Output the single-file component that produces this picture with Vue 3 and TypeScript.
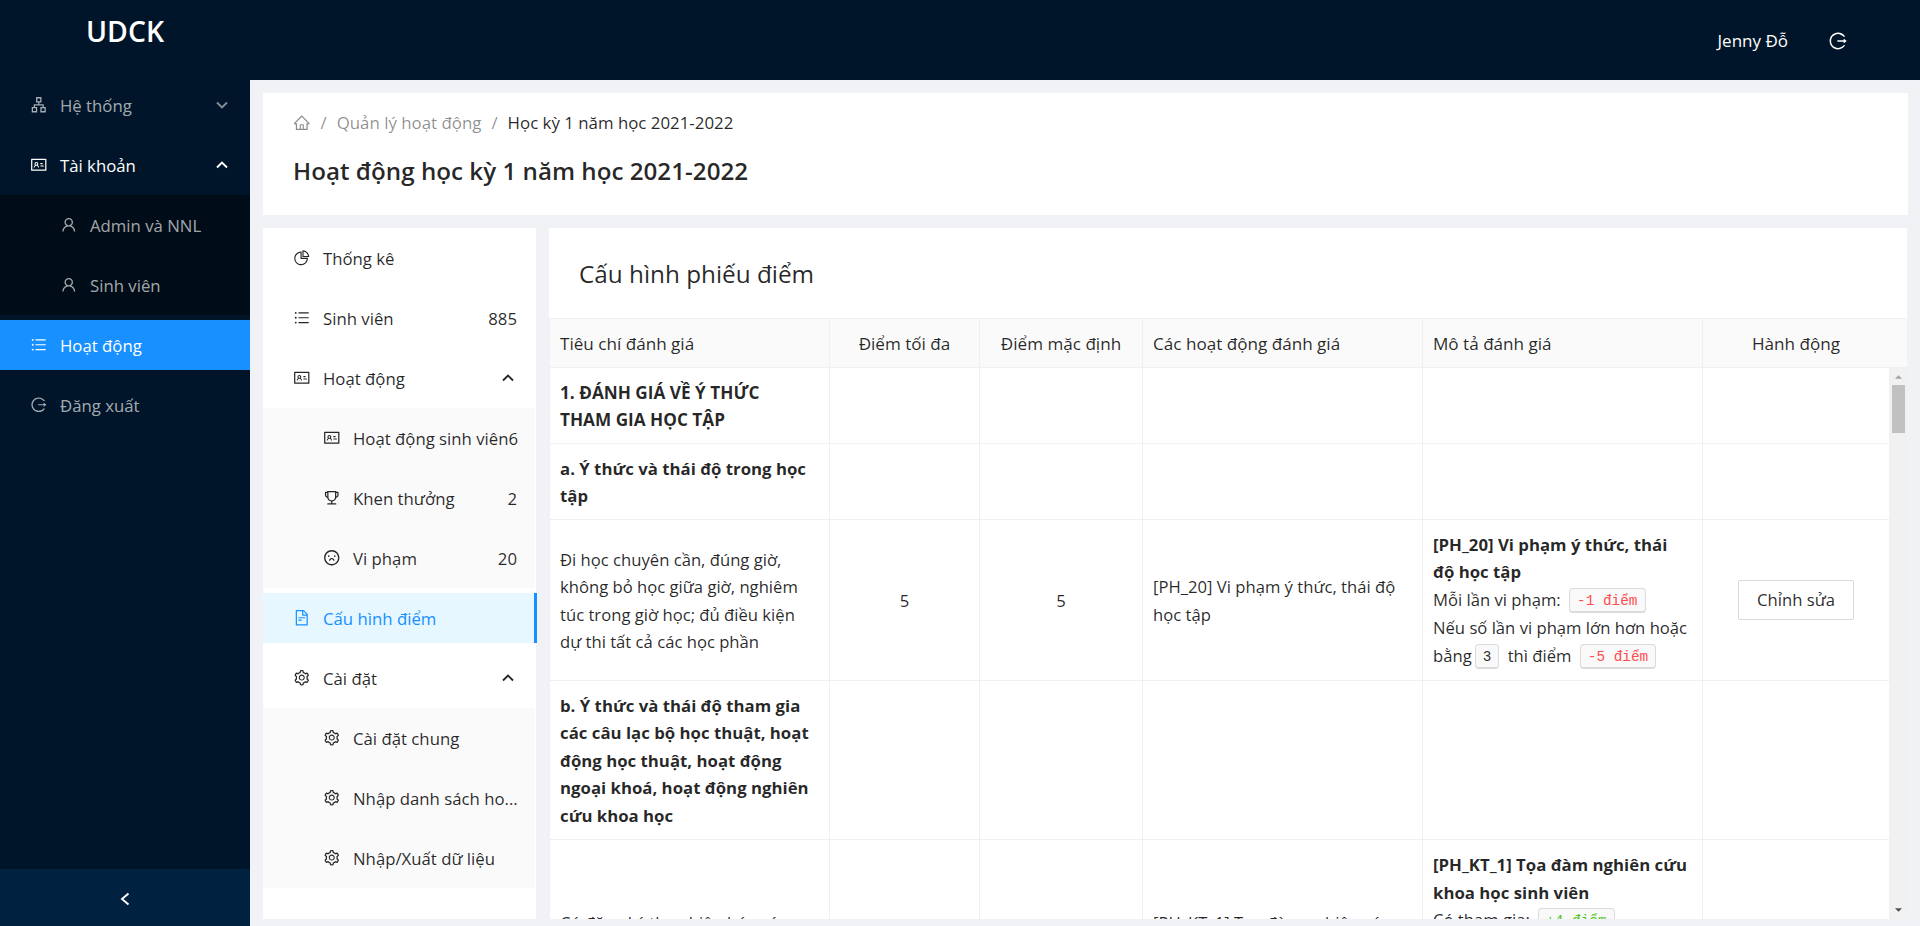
<script setup lang="ts">
interface MenuEntry {
  label: string
  icon: string
  count?: string
  arrow?: 'up' | 'down'
  state?: 'open' | 'selected'
  children?: MenuEntry[]
}

interface Row {
  kind: string
  title: string[]
  bold?: boolean
  max?: string
  def?: string
  activity?: string[]
  rule?: 'violation' | 'reward'
}

const icons: Record<string, string> = {
  apartment:
    'M908 640H804V488c0-4.4-3.6-8-8-8H548v-96h108c8.8 0 16-7.2 16-16V80c0-8.8-7.2-16-16-16H368c-8.8 0-16 7.2-16 16v288c0 8.8 7.2 16 16 16h108v96H228c-4.4 0-8 3.6-8 8v152H116c-8.8 0-16 7.2-16 16v288c0 8.8 7.2 16 16 16h288c8.8 0 16-7.2 16-16V656c0-8.8-7.2-16-16-16H292v-88h440v88H620c-8.8 0-16 7.2-16 16v288c0 8.8 7.2 16 16 16h288c8.8 0 16-7.2 16-16V656c0-8.8-7.2-16-16-16zm-564 76v168H176V716h168zm84-408V140h168v168H428zm420 576H680V716h168v168z',
  idcard:
    'M928 160H96c-17.7 0-32 14.3-32 32v640c0 17.7 14.3 32 32 32h832c17.7 0 32-14.3 32-32V192c0-17.7-14.3-32-32-32zm-40 632H136V232h752v560zM610.3 476h123.4c1.3 0 2.3-3.6 2.3-8v-48c0-4.4-1-8-2.3-8H610.3c-1.3 0-2.3 3.6-2.3 8v48c0 4.4 1 8 2.3 8zm4.8 144h185.7c3.9 0 7.1-3.6 7.1-8v-48c0-4.4-3.2-8-7.1-8H615.1c-3.9 0-7.1 3.6-7.1 8v48c0 4.4 3.2 8 7.1 8zM224 673h43.9c4.2 0 7.6-3.3 7.9-7.5 3.8-50.5 46-90.5 97.2-90.5s93.4 40 97.2 90.5c.3 4.2 3.7 7.5 7.9 7.5H522a8 8 0 008-8.4c-2.8-53.3-32-99.7-74.6-126.1a111.8 111.8 0 0029.1-75.5c0-61.9-49.9-112-111.4-112s-111.4 50.1-111.4 112c0 29.1 11 55.5 29.1 75.5a158.09 158.09 0 00-74.6 126.1c-.4 4.6 3.2 8.4 7.8 8.4zm149-262c28.5 0 51.7 23.3 51.7 52s-23.2 52-51.7 52-51.7-23.3-51.7-52 23.2-52 51.7-52z',
  user:
    'M858.5 763.6a374 374 0 00-80.6-119.5 375.63 375.63 0 00-119.5-80.6c-.4-.2-.8-.3-1.2-.5C719.5 518 760 444.7 760 362c0-137-111-248-248-248S264 225 264 362c0 82.7 40.5 156 102.8 201.1-.4.2-.8.3-1.2.5-44.8 18.9-85 46-119.5 80.6a375.63 375.63 0 00-80.6 119.5A371.7 371.7 0 00136 901.8a8 8 0 008 8.2h60c4.4 0 7.9-3.5 8-7.8 2-77.2 33-149.5 87.8-204.3 56.7-56.7 132-87.9 212.2-87.9s155.5 31.2 212.2 87.9C779 752.7 810 825 812 902.2c.1 4.4 3.6 7.8 8 7.8h60a8 8 0 008-8.2c-1-47.8-10.9-94.3-29.5-138.2zM512 534c-45.9 0-89.1-17.9-121.6-50.4S340 407.9 340 362c0-45.9 17.9-89.1 50.4-121.6S466.1 190 512 190s89.1 17.9 121.6 50.4S684 316.1 684 362c0 45.9-17.9 89.1-50.4 121.6S557.9 534 512 534z',
  list:
    'M912 192H328c-4.4 0-8 3.6-8 8v56c0 4.4 3.6 8 8 8h584c4.4 0 8-3.6 8-8v-56c0-4.4-3.6-8-8-8zm0 284H328c-4.4 0-8 3.6-8 8v56c0 4.4 3.6 8 8 8h584c4.4 0 8-3.6 8-8v-56c0-4.4-3.6-8-8-8zm0 284H328c-4.4 0-8 3.6-8 8v56c0 4.4 3.6 8 8 8h584c4.4 0 8-3.6 8-8v-56c0-4.4-3.6-8-8-8zM104 228a56 56 0 10112 0 56 56 0 10-112 0zm0 284a56 56 0 10112 0 56 56 0 10-112 0zm0 284a56 56 0 10112 0 56 56 0 10-112 0z',
  logout:
    'M868 732h-70.3c-4.8 0-9.3 2.1-12.3 5.8-7 8.5-14.5 16.7-22.4 24.5a353.84 353.84 0 01-112.7 75.9A352.8 352.8 0 01512.4 866c-47.9 0-94.3-9.4-137.9-27.8a353.84 353.84 0 01-112.7-75.9 353.28 353.28 0 01-76-112.5C167.3 606.2 158 559.9 158 512s9.4-94.2 27.8-137.8c17.8-42.1 43.4-80 76-112.5s70.5-58.1 112.7-75.9c43.6-18.4 90-27.8 137.9-27.8 47.9 0 94.3 9.3 137.9 27.8 42.2 17.8 80.1 43.4 112.7 75.9 7.9 7.9 15.3 16.1 22.4 24.5 3 3.7 7.6 5.8 12.3 5.8H868c6.3 0 10.2-7 6.7-12.3C798 160.5 663.8 81.6 511.3 82 271.7 82.6 79.6 277.1 82 516.4 84.4 751.9 276.2 942 512.4 942c152.1 0 285.7-78.8 362.3-197.7 3.4-5.3-.4-12.3-6.7-12.3zm88.9-226.3L815 393.7c-5.3-4.2-13-.4-13 6.3v76H488c-4.4 0-8 3.6-8 8v56c0 4.4 3.6 8 8 8h314v76c0 6.7 7.8 10.5 13 6.3l141.9-112a8 8 0 000-12.6z',
  home:
    'M946.5 505L560.1 118.8l-25.9-25.9a31.5 31.5 0 00-44.4 0L77.5 505a63.9 63.9 0 00-18.8 46c.4 35.2 29.7 63.3 64.9 63.3h42.5V940h691.8V614.3h43.4c17.1 0 33.2-6.7 45.3-18.8a63.6 63.6 0 0018.7-45.3c0-17-6.7-33.1-18.8-45.2zM568 868H456V664h112v204zm217.9-325.7V868H632V640c0-22.1-17.9-40-40-40H432c-22.1 0-40 17.9-40 40v228H238.1V542.3h-96l370-369.7 23.1 23.1L882 542.3h-96.1z',
  pie:
    'M864 518H506V160c0-4.4-3.6-8-8-8h-26a398.46 398.46 0 00-282.8 117.1 398.19 398.19 0 00-85.7 127.1A397.61 397.61 0 0072 552a398.46 398.46 0 00117.1 282.8c36.7 36.7 79.5 65.6 127.1 85.7A397.61 397.61 0 00472 952a398.46 398.46 0 00282.8-117.1c36.7-36.7 65.6-79.5 85.7-127.1A397.61 397.61 0 00872 552v-26c0-4.4-3.6-8-8-8zM705.7 787.8A331.59 331.59 0 01470.4 884c-88.1-.4-170.9-34.9-233.2-97.2C174.5 724.1 140 640.7 140 552c0-88.7 34.5-172.1 97.2-234.8 54.6-54.6 124.9-87.9 200.8-95.5V586h364.3c-7.7 76.3-41.3 147-96.6 201.8zM952 462.4l-2.6-28.2c-8.5-92.1-49.4-179-115.2-244.6A399.4 399.4 0 00589 74.6L560.7 72c-4.7-.4-8.7 3.2-8.7 7.9V464c0 4.4 3.6 8 8 8l384-1c4.7 0 8.4-4 8-8.6zm-332.2-58.2V147.6a332.24 332.24 0 01166.4 89.8c45.7 45.6 77 103.6 90 166.1l-256.4.7z',
  trophy:
    'M868 160h-92v-40c0-4.4-3.6-8-8-8H256c-4.4 0-8 3.6-8 8v40h-92a44 44 0 00-44 44v148c0 81.7 60 149.6 138.2 162C265.7 630.2 359 721.7 476 734.5v105.2H280c-17.7 0-32 14.3-32 32V904c0 4.4 3.6 8 8 8h512c4.4 0 8-3.6 8-8v-32.3c0-17.7-14.3-32-32-32H548V734.5C665 721.7 758.3 630.2 773.8 514 852 501.6 912 433.7 912 352V204a44 44 0 00-44-44zM184 352V232h64v207.6a91.99 91.99 0 01-64-87.6zm520 128c0 49.1-19.1 95.4-53.9 130.1-34.8 34.8-81 53.9-130.1 53.9h-16c-49.1 0-95.4-19.1-130.1-53.9-34.8-34.8-53.9-81-53.9-130.1V184h384v296zm136-128c0 41-26.9 75.8-64 87.6V232h64v120z',
  frown:
    'M512 64C264.6 64 64 264.6 64 512s200.6 448 448 448 448-200.6 448-448S759.4 64 512 64zm0 820a372 372 0 110-744 372 372 0 010 744zM288 421a48 48 0 1096 0 48 48 0 10-96 0zm352 0a48 48 0 1096 0 48 48 0 10-96 0zM512 533c-85.5 0-155.6 67.3-160 151.6a8 8 0 008 8.4h48.1c4.2 0 7.8-3.2 8.1-7.4C420 636.1 461.5 597 512 597s92.1 39.1 95.8 88.6c.3 4.2 3.9 7.4 8.1 7.4H664a8 8 0 008-8.4C667.6 600.3 597.5 533 512 533z',
  file:
    'M854.6 288.6L639.4 73.4c-6-6-14.1-9.4-22.6-9.4H192c-17.7 0-32 14.3-32 32v832c0 17.7 14.3 32 32 32h640c17.7 0 32-14.3 32-32V311.3c0-8.5-3.4-16.7-9.4-22.7zM790.2 326H602V137.8L790.2 326zm1.8 562H232V136h302v216a42 42 0 0042 42h216v494zM504 618H320c-4.4 0-8 3.6-8 8v48c0 4.4 3.6 8 8 8h184c4.4 0 8-3.6 8-8v-48c0-4.4-3.6-8-8-8zM312 490v48c0 4.4 3.6 8 8 8h384c4.4 0 8-3.6 8-8v-48c0-4.4-3.6-8-8-8H320c-4.4 0-8 3.6-8 8z',
  setting:
    'M924.8 625.7l-65.5-56c3.1-19 4.7-38.4 4.7-57.8s-1.6-38.8-4.7-57.8l65.5-56a32.03 32.03 0 009.3-35.2l-.9-2.6a443.74 443.74 0 00-79.7-137.9l-1.8-2.1a32.12 32.12 0 00-35.1-9.5l-81.3 28.9c-30-24.6-63.5-44-99.7-57.6l-15.7-85a32.05 32.05 0 00-25.8-25.7l-2.7-.5c-52.1-9.4-106.9-9.4-159 0l-2.7.5a32.05 32.05 0 00-25.8 25.7l-15.8 85.4a351.86 351.86 0 00-99 57.4l-81.9-29.1a32 32 0 00-35.1 9.5l-1.8 2.1a446.02 446.02 0 00-79.7 137.9l-.9 2.6c-4.5 12.5-.8 26.5 9.3 35.2l66.3 56.6c-3.1 18.8-4.6 38-4.6 57.1 0 19.2 1.5 38.4 4.6 57.1L99 625.5a32.03 32.03 0 00-9.3 35.2l.9 2.6c18.1 50.4 44.9 96.9 79.7 137.9l1.8 2.1a32.12 32.12 0 0035.1 9.5l81.9-29.1c29.8 24.5 63.1 43.9 99 57.4l15.8 85.4a32.05 32.05 0 0025.8 25.7l2.7.5a449.4 449.4 0 00159 0l2.7-.5a32.05 32.05 0 0025.8-25.7l15.7-85a350 350 0 0099.7-57.6l81.3 28.9a32 32 0 0035.1-9.5l1.8-2.1c34.8-41.1 61.6-87.5 79.7-137.9l.9-2.6c4.5-12.3.8-26.3-9.3-35zM788.3 465.9c2.5 15.1 3.8 30.6 3.8 46.1s-1.3 31-3.8 46.1l-6.6 40.1 74.7 63.9a370.03 370.03 0 01-42.6 73.6L721 702.8l-31.4 25.8c-23.9 19.6-50.5 35-79.3 45.8l-38.1 14.3-17.9 97a377.5 377.5 0 01-85 0l-17.9-97.2-37.8-14.5c-28.5-10.8-55-26.2-78.7-45.7l-31.4-25.9-93.4 33.2c-17-22.9-31.2-47.6-42.6-73.6l75.5-64.5-6.5-40c-2.4-14.9-3.7-30.3-3.7-45.5 0-15.3 1.2-30.6 3.7-45.5l6.5-40-75.5-64.5c11.3-26.1 25.6-50.7 42.6-73.6l93.4 33.2 31.4-25.9c23.7-19.5 50.2-34.9 78.7-45.7l37.9-14.3 17.9-97.2c28.1-3.2 56.8-3.2 85 0l17.9 97 38.1 14.3c28.7 10.8 55.4 26.2 79.3 45.8l31.4 25.8 92.8-32.9c17 22.9 31.2 47.6 42.6 73.6L781.8 426l6.5 39.9zM512 326c-97.2 0-176 78.8-176 176s78.8 176 176 176 176-78.8 176-176-78.8-176-176-176zm79.2 255.2A111.6 111.6 0 01512 614c-29.9 0-58-11.7-79.2-32.8A111.6 111.6 0 01400 502c0-29.9 11.7-58 32.8-79.2C454 401.6 482.1 390 512 390c29.9 0 58 11.6 79.2 32.8A111.6 111.6 0 01624 502c0 29.9-11.7 58-32.8 79.2z',
}

const mainMenu: MenuEntry[] = [
  { label: 'Hệ thống', icon: 'apartment', arrow: 'down' },
  {
    label: 'Tài khoản',
    icon: 'idcard',
    arrow: 'up',
    state: 'open',
    children: [
      { label: 'Admin và NNL', icon: 'user' },
      { label: 'Sinh viên', icon: 'user' },
    ],
  },
  { label: 'Hoạt động', icon: 'list', state: 'selected' },
  { label: 'Đăng xuất', icon: 'logout' },
]

const termMenu: MenuEntry[] = [
  { label: 'Thống kê', icon: 'pie' },
  { label: 'Sinh viên', icon: 'list', count: '885' },
  {
    label: 'Hoạt động',
    icon: 'idcard',
    arrow: 'up',
    children: [
      { label: 'Hoạt động sinh viên', icon: 'idcard', count: '6' },
      { label: 'Khen thưởng', icon: 'trophy', count: '2' },
      { label: 'Vi phạm', icon: 'frown', count: '20' },
    ],
  },
  { label: 'Cấu hình điểm', icon: 'file', state: 'selected' },
  {
    label: 'Cài đặt',
    icon: 'setting',
    arrow: 'up',
    children: [
      { label: 'Cài đặt chung', icon: 'setting' },
      { label: 'Nhập danh sách ho...', icon: 'setting' },
      { label: 'Nhập/Xuất dữ liệu', icon: 'setting' },
    ],
  },
]

const rows: Row[] = [
  { kind: 'two caps', bold: true, title: ['1. ĐÁNH GIÁ VỀ Ý THỨC', 'THAM GIA HỌC TẬP'] },
  { kind: 'two', bold: true, title: ['a. Ý thức và thái độ trong học', 'tập'] },
  {
    kind: 'detail',
    title: ['Đi học chuyên cần, đúng giờ,', 'không bỏ học giữa giờ, nghiêm', 'túc trong giờ học; đủ điều kiện', 'dự thi tất cả các học phần'],
    max: '5',
    def: '5',
    activity: ['[PH_20] Vi phạm ý thức, thái độ', 'học tập'],
    rule: 'violation',
  },
  {
    kind: 'five',
    bold: true,
    title: ['b. Ý thức và thái độ tham gia', 'các câu lạc bộ học thuật, hoạt', 'động học thuật, hoạt động', 'ngoại khoá, hoạt động nghiên', 'cứu khoa học'],
  },
  {
    kind: 'last',
    title: ['Có đăng ký thực hiện báo cáo'],
    activity: ['[PH_KT_1] Tọa đàm nghiên cứu'],
    rule: 'reward',
  },
]
</script>

<template>
  <div class="app">
    <aside class="sider">
      <div class="logo">UDCK</div>
      <nav class="menu dark">
        <template v-for="item in mainMenu" :key="item.label">
          <div class="item" :class="item.state">
            <svg class="icon" viewBox="0 0 1024 1024"><path :d="icons[item.icon]" /></svg>
            <span class="label">{{ item.label }}</span>
            <svg v-if="item.arrow" class="arrow" :class="item.arrow" viewBox="0 0 12 8"><path d="M1 6.500 6 1.500 11 6.500" /></svg>
          </div>
          <div v-if="item.children" class="sub">
            <div v-for="child in item.children" :key="child.label" class="item">
              <svg class="icon" viewBox="0 0 1024 1024"><path :d="icons[child.icon]" /></svg>
              <span class="label">{{ child.label }}</span>
            </div>
          </div>
        </template>
      </nav>
      <div class="trigger">
        <svg class="left" viewBox="0 0 10 14"><path d="M8.500 1.500 2 7l6.500 5.500" /></svg>
      </div>
    </aside>

    <div class="main">
      <header class="topbar">
        <span>Jenny Đỗ</span>
        <svg class="out" viewBox="0 0 1024 1024"><path :d="icons.logout" /></svg>
      </header>

      <section class="page-head">
        <div class="crumbs">
          <svg class="icon" viewBox="0 0 1024 1024"><path :d="icons.home" /></svg>
          <span class="slash">/</span>
          <span>Quản lý hoạt động</span>
          <span class="slash">/</span>
          <span class="current">Học kỳ 1 năm học 2021-2022</span>
        </div>
        <h1>Hoạt động học kỳ 1 năm học 2021-2022</h1>
      </section>

      <div class="body">
        <nav class="menu light">
          <template v-for="item in termMenu" :key="item.label">
            <div class="item" :class="item.state">
              <svg class="icon" viewBox="0 0 1024 1024"><path :d="icons[item.icon]" /></svg>
              <span class="label">{{ item.label }}</span>
              <span v-if="item.count" class="count">{{ item.count }}</span>
              <svg v-if="item.arrow" class="arrow" viewBox="0 0 12 8"><path d="M1 6.500 6 1.500 11 6.500" /></svg>
            </div>
            <div v-if="item.children" class="sub">
              <div v-for="child in item.children" :key="child.label" class="item">
                <svg class="icon" viewBox="0 0 1024 1024"><path :d="icons[child.icon]" /></svg>
                <span class="label">{{ child.label }}</span>
                <span v-if="child.count" class="count">{{ child.count }}</span>
              </div>
            </div>
          </template>
        </nav>

        <section class="card">
          <h2>Cấu hình phiếu điểm</h2>
          <div class="grid thead">
            <div class="cell">Tiêu chí đánh giá</div>
            <div class="cell mid">Điểm tối đa</div>
            <div class="cell mid">Điểm mặc định</div>
            <div class="cell">Các hoạt động đánh giá</div>
            <div class="cell">Mô tả đánh giá</div>
            <div class="cell mid">Hành động</div>
          </div>
          <div class="scroller">
            <div class="rows">
              <div v-for="row in rows" :key="row.title[0]" class="grid row" :class="row.kind">
                <div class="cell" :class="{ bold: row.bold }">
                  <div v-for="line in row.title" :key="line">{{ line }}</div>
                </div>
                <div class="cell mid">{{ row.max }}</div>
                <div class="cell mid">{{ row.def }}</div>
                <div class="cell">
                  <div v-for="line in row.activity" :key="line">{{ line }}</div>
                </div>
                <div class="cell">
                  <template v-if="row.rule === 'violation'">
                    <div class="bold">[PH_20] Vi phạm ý thức, thái</div>
                    <div class="bold">độ học tập</div>
                    <div class="tagged">Mỗi lần vi phạm: <kbd class="minus">-1 điểm</kbd></div>
                    <div>Nếu số lần vi phạm lớn hơn hoặc</div>
                    <div class="tagged">bằng<kbd class="times">3</kbd> thì điểm <kbd class="minus">-5 điểm</kbd></div>
                  </template>
                  <template v-else-if="row.rule === 'reward'">
                    <div class="bold">[PH_KT_1] Tọa đàm nghiên cứu</div>
                    <div class="bold">khoa học sinh viên</div>
                    <div class="tagged">Có tham gia: <kbd class="plus">+4 điểm</kbd></div>
                  </template>
                </div>
                <div class="cell mid action">
                  <button v-if="row.rule === 'violation'" type="button">Chỉnh sửa</button>
                </div>
              </div>
            </div>
            <div class="bar">
              <svg class="tri" viewBox="0 0 8 4"><path d="M0 4 4 0 8 4z" /></svg>
              <div class="thumb"></div>
              <svg class="tri end" viewBox="0 0 8 4"><path d="M0 0 4 4 8 0z" /></svg>
            </div>
          </div>
        </section>
      </div>
    </div>
  </div>
</template>

<style>
body {
  overflow: hidden;
}
</style>

<style scoped>
* {
  box-sizing: border-box;
}
.app {
  display: flex;
  width: 1920px;
  height: 926px;
  overflow: hidden;
  background: #f0f2f5;
  color: rgba(0, 0, 0, 0.85);
  font-family: 'Open Sans', 'Noto Sans', sans-serif;
  font-size: 16.65px;
  font-weight: 400;
  line-height: 27.5px;
  white-space: nowrap;
}
svg {
  display: block;
  flex: none;
  fill: currentColor;
}
.sider {
  display: flex;
  flex-direction: column;
  flex: none;
  width: 250px;
  background: #001529;
}
.logo {
  height: 75px;
  padding: 13px 0 0 86px;
  color: #fff;
  font-size: 28.4px;
  font-weight: 600;
  line-height: 37px;
}
.trigger {
  display: flex;
  align-items: center;
  justify-content: center;
  height: 57px;
  margin-top: auto;
  padding-top: 3px;
  background: #002140;
  color: #fff;
}
.left {
  width: 10px;
  height: 14px;
}
.left path,
.arrow path {
  fill: none;
  stroke: currentColor;
  stroke-width: 1.9;
}
.menu {
  font-size: 16.75px;
}
.item {
  display: flex;
  align-items: center;
  height: 60px;
  border: solid transparent;
  border-width: 5px 0;
  background-clip: padding-box;
}
.label,
.count {
  padding-top: 1px;
}
.icon {
  width: 17.5px;
  height: 17.5px;
  margin-right: 12.5px;
}
.arrow {
  width: 12px;
  height: 8px;
  margin-left: auto;
}
.down {
  opacity: 0.8;
  transform: rotate(180deg);
}
.dark {
  color: rgba(255, 255, 255, 0.65);
}
.dark .item {
  padding: 0 22px 0 30px;
}
.dark .sub {
  background: #000c17;
}
.dark .sub .item {
  padding-left: 60px;
}
.dark .open {
  color: #fff;
}
.dark .selected {
  background-color: #1890ff;
  color: #fff;
}
.main {
  flex: 1;
  display: flex;
  flex-direction: column;
  min-width: 0;
}
.topbar {
  display: flex;
  flex: none;
  align-items: center;
  justify-content: flex-end;
  gap: 40px;
  height: 80px;
  padding: 2px 72px 0 0;
  background: #001529;
  color: #fff;
  font-size: 17px;
}
.out {
  width: 20px;
  height: 20px;
}
.page-head {
  flex: none;
  height: 122px;
  margin: 13px 12px 13px 13px;
  padding: 16px 30px;
  background: #fff;
}
.crumbs {
  display: flex;
  align-items: center;
  height: 28px;
  color: rgba(0, 0, 0, 0.45);
  font-size: 16.85px;
}
.crumbs .icon {
  margin-right: 0;
}
.slash {
  margin: 0 10px;
}
.current {
  color: rgba(0, 0, 0, 0.85);
}
h1 {
  margin: 14px 0 0;
  font-size: 24.2px;
  font-weight: 600;
  line-height: 40px;
}
.body {
  display: flex;
  flex: none;
  gap: 13px;
  height: 691px;
  margin-left: 13px;
}
.light {
  flex: none;
  width: 273px;
  background: #fff;
}
.light .item {
  padding: 0 19px 0 30px;
}
.light .sub {
  width: 272px;
  background: #fafafa;
}
.light .sub .item {
  padding: 0 18px 0 60px;
}
.light .arrow {
  margin-right: 3px;
}
.count {
  margin-left: auto;
}
.light .selected {
  position: relative;
  width: 274px;
  background-color: #e6f7ff;
  color: #1890ff;
}
.light .selected::after {
  content: '';
  position: absolute;
  top: 0;
  right: 0;
  width: 3px;
  height: 50px;
  background: #1890ff;
}
.card {
  display: flex;
  flex-direction: column;
  width: 1358px;
  background: #fff;
}
h2 {
  height: 90px;
  margin: 0;
  padding: 26px 30px 0;
  font-size: 24.3px;
  font-weight: 500;
  line-height: 40px;
}
.grid {
  display: grid;
  grid-template-columns: 280px 150px 163px 280px 280px 1fr;
}
.thead {
  height: 50px;
  border: solid #f0f0f0;
  border-width: 1px 0 1px 1px;
  background: #fafafa;
  font-size: 17.1px;
  font-weight: 500;
}
.thead .cell:last-child {
  padding-right: 28px;
}
.cell {
  display: flex;
  flex-direction: column;
  justify-content: center;
  min-width: 0;
  padding: 1px 10px 0;
  border-right: 1px solid #f0f0f0;
}
.cell:last-child {
  border-right: 0;
}
.mid {
  align-items: center;
}
.row .action {
  padding-top: 0;
}
.scroller {
  display: flex;
  flex: 1;
  min-height: 0;
  overflow: hidden;
}
.rows {
  flex: none;
  width: 1340px;
  border-left: 1px solid #f0f0f0;
}
.row {
  border-bottom: 1px solid #f0f0f0;
}
.two {
  height: 76px;
}
.detail {
  height: 161px;
}
.five {
  height: 159px;
}
.last {
  height: 170px;
}
.last .cell {
  justify-content: flex-start;
  padding-top: 69px;
}
.last .cell:nth-child(5) {
  padding-top: 11px;
}
.bold {
  font-size: 16.8px;
  font-weight: 700;
}
.caps .bold {
  font-size: 17.2px;
}
.tagged {
  height: 28.5px;
}
kbd {
  display: inline-block;
  height: 25.5px;
  margin: 2px 4px 0;
  padding: 0 7px;
  border: 1px solid rgba(100, 100, 100, 0.2);
  border-bottom-width: 2px;
  border-radius: 4px;
  background: rgba(150, 150, 150, 0.06);
  font-family: 'Liberation Mono', monospace;
  font-size: 14.4px;
  font-weight: 400;
  line-height: 24px;
  vertical-align: top;
}
.times {
  margin-left: 3px;
}
.minus {
  color: #ff4d4f;
}
.plus {
  color: #52c41a;
}
button {
  height: 40px;
  padding: 0 18px;
  border: 1px solid #d9d9d9;
  border-radius: 2px;
  background: #fff;
  color: inherit;
  font: inherit;
}
.bar {
  display: flex;
  flex-direction: column;
  align-items: center;
  width: 18px;
  padding: 7px 0;
  background: #f1f1f1;
}
.tri {
  width: 7px;
  height: 4px;
  fill: #a3a3a3;
}
.tri.end {
  margin-top: auto;
  fill: #505050;
}
.thumb {
  width: 13px;
  height: 48px;
  margin-top: 6px;
  background: #c1c1c1;
}
</style>
